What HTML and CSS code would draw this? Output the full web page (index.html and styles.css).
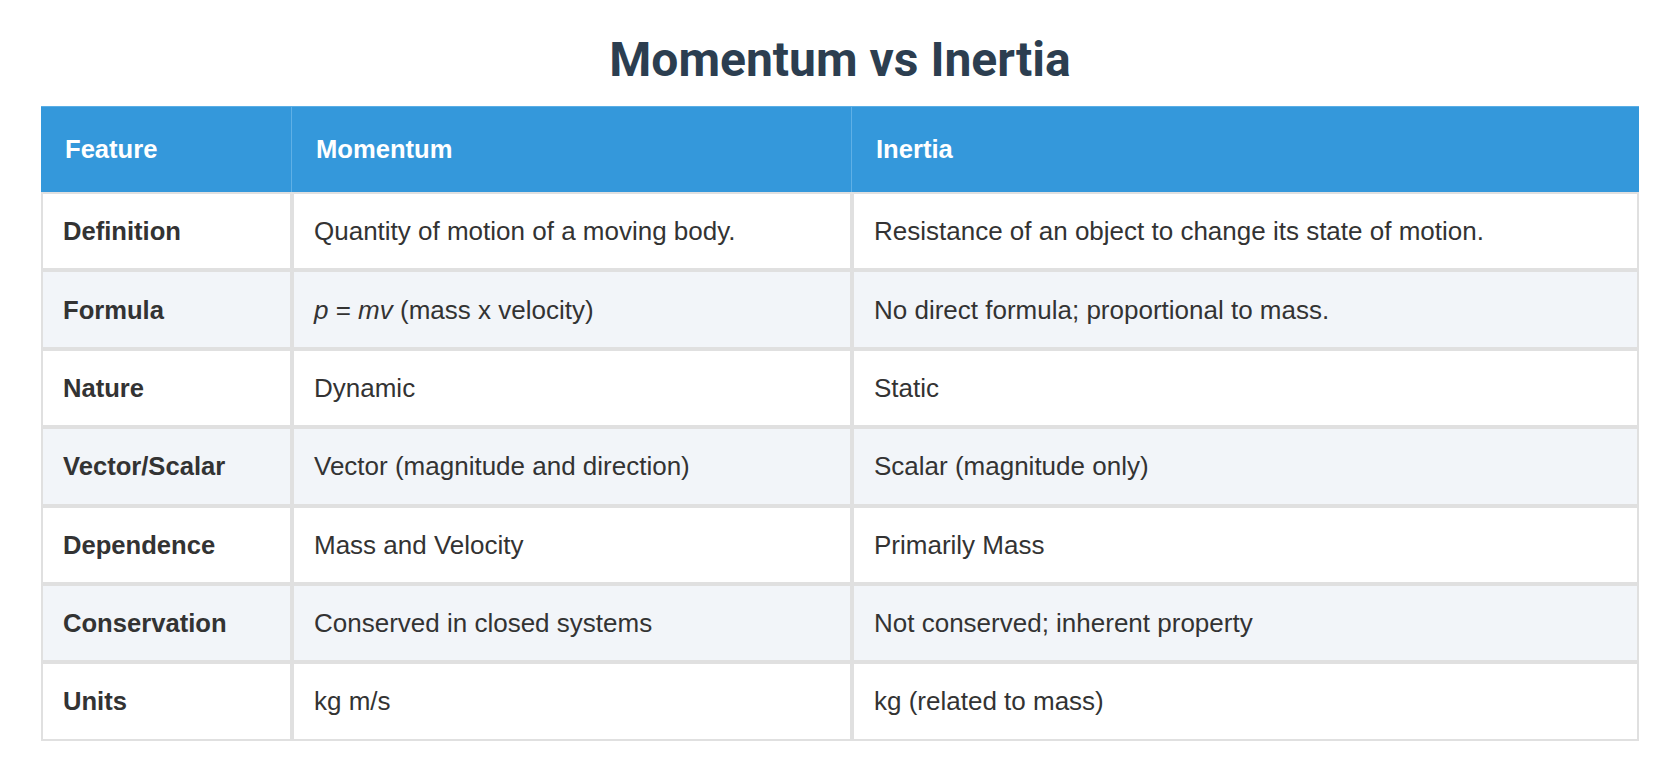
FILE: index.html
```html
<!DOCTYPE html>
<html lang="en">
<head>
<meta charset="utf-8">
<title>Momentum vs Inertia</title>
<link rel="stylesheet" href="styles.css">
</head>
<body>
<h1 class="title">Momentum vs Inertia</h1>
<table class="compare">
  <colgroup>
    <col class="c1">
    <col class="c2">
    <col class="c3">
  </colgroup>
  <thead>
    <tr>
      <th>Feature</th>
      <th>Momentum</th>
      <th>Inertia</th>
    </tr>
  </thead>
  <tbody>
    <tr>
      <td>Definition</td>
      <td>Quantity of motion of a moving body.</td>
      <td>Resistance of an object to change its state of motion.</td>
    </tr>
    <tr>
      <td>Formula</td>
      <td><em>p</em> = <em>mv</em> (mass x velocity)</td>
      <td>No direct formula; proportional to mass.</td>
    </tr>
    <tr>
      <td>Nature</td>
      <td>Dynamic</td>
      <td>Static</td>
    </tr>
    <tr>
      <td>Vector/Scalar</td>
      <td>Vector (magnitude and direction)</td>
      <td>Scalar (magnitude only)</td>
    </tr>
    <tr>
      <td>Dependence</td>
      <td>Mass and Velocity</td>
      <td>Primarily Mass</td>
    </tr>
    <tr>
      <td>Conservation</td>
      <td>Conserved in closed systems</td>
      <td>Not conserved; inherent property</td>
    </tr>
    <tr>
      <td>Units</td>
      <td>kg m/s</td>
      <td>kg (related to mass)</td>
    </tr>
  </tbody>
</table>
</body>
</html>
```
FILE: styles.css
```css
html, body {
  margin: 0;
  padding: 0;
  background: #ffffff;
}

body {
  font-family: "Liberation Sans", Arial, sans-serif;
  color: #333333;
}

.title {
  margin: 0;
  padding: 32px 0 18px;
  font-family: Roboto, "Liberation Sans", sans-serif;
  font-weight: 700;
  font-size: 48px;
  line-height: 56px;
  color: #2c3e50;
  text-align: center;
}

.compare {
  width: 1598px;
  margin: 0 auto;
  table-layout: fixed;
  border-collapse: separate;
  border-spacing: 0;
  font-size: 26px;
  line-height: 30px;
}

.c1 { width: 251px; }
.c2 { width: 560px; }
.c3 { width: 787px; }

.compare th {
  background: #3498db;
  color: #ffffff;
  font-size: 25.6px;
  font-weight: 700;
  text-align: left;
  padding: 27px 24px 28px;
  border-top: 1px solid #5aaee5;
  border-right: 1px solid #5fb0e6;
}

.compare th:last-child {
  border-right: none;
}

.compare td {
  padding: 22.2px 20px;
  border: 2px solid #e0e0e0;
  background: #ffffff;
  vertical-align: middle;
}

.compare tbody tr:nth-child(even) td {
  background: #f2f5f9;
}

.compare td:first-child {
  font-size: 25.6px;
  font-weight: 700;
  color: #333333;
}

.compare em {
  font-style: italic;
}
```
